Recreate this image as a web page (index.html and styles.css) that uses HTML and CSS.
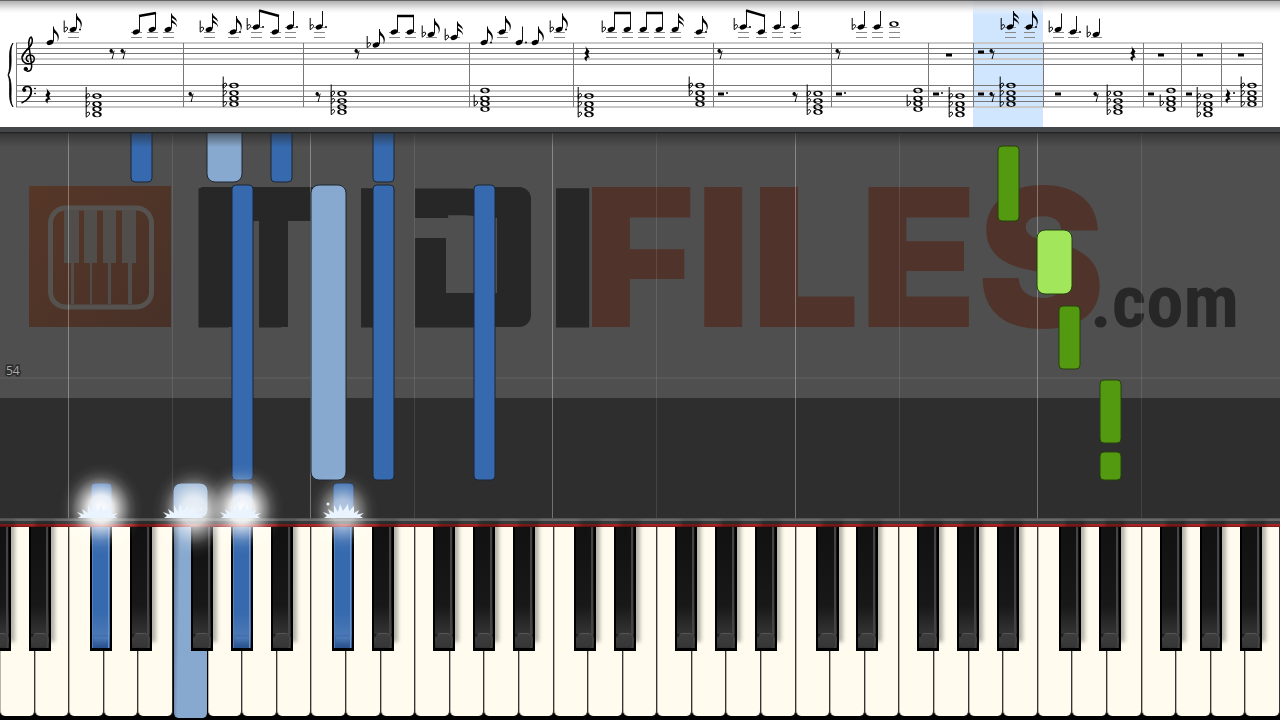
FILE: index.html
```html
<!DOCTYPE html>
<html lang="en">
<head>
<meta charset="utf-8">
<meta name="viewport" content="width=device-width, initial-scale=1">
<title>MIDIFILES.com</title>
<link rel="stylesheet" href="styles.css">
</head>
<body>
<header class="score">
  <svg class="score-sheet" viewBox="0 0 1280 127" role="img" aria-label="Sheet music">
    <defs>
      <ellipse id="head" rx="3.5" ry="2.4" transform="rotate(-20)"/>
      <path id="whole" fill-rule="evenodd" d="M-4.700 0a4.700 2.700 0 1 0 9.400 0a4.700 2.700 0 1 0-9.400 0M-2.600-.8C-2-2.300 1.500-2.200 2.500 0C2.800 1.700 1.500 2.200 0 2C-1.600 1.700-2.800.7-2.600-.8"/>
      <path id="flat" fill="none" stroke="#000" stroke-width="1" d="M-1.800-9V2.600C0 1.700 2 0 1.600-1.500C1.200-3-.8-2.500-1.800-1"/>
      <path id="flag" d="M0-16C.5-12 5.500-10 5.300-5.500C5.200-3 4.400-1.500 3.800-.8C5-4.500 4-8 0-10Z"/>
      <path id="flag2" d="M0-16C.5-13 5.500-12 5.500-7.500C5-9 2-11 0-11.800ZM0-11C.5-8 6-7 5.500-2C5-5 2-6 0-7Z"/>
      <path id="rest8" d="M-2.500-3.500a1.700 1.700 0 1 1 3.200 1C2-2.500 2.400-3.500 2.800-4.300L.6 5H-.5L1.500-1.400C-.5-.5-3-1.500-2.500-3.500"/>
      <path id="rest4" d="M-1.800-8L2.500-2.500C.5-.5 .8 1 3 3.800C.5 3-1 4-.2 7.400C-4 5-2.500 2-.2 2.300L-2.600-1C-.5-3-.5-5-1.800-8"/>
      <rect id="rest2" x="-3" y="-1.500" width="6" height="3"/>
      <linearGradient id="fade" x2="0" y2="1"><stop stop-color="#999"/><stop offset=".5" stop-color="#ddd"/><stop offset="1" stop-color="#fff" stop-opacity="0"/></linearGradient>
    </defs>
    <rect class="measure" x="973" width="70" height="127"/>
    <rect width="1280" height="15" fill="url(#fade)" opacity=".85"/>
    <rect width="1280" height="1" fill="#666"/>
    <g id="staves" class="staves"></g>
    <path d="M13 43C8.500 50 14 65 8.500 75C14 85 8.500 100 13 107C6.500 99 12 84 8 75C12 66 6.500 51 13 43" stroke="#000" stroke-width=".8"/>
    <g class="clef">
      <path d="M26.500 71C30.500 72 32.500 69 31.500 64L28.800 45C28.500 40 30 37 31.200 37C33 39 32.800 44 29 48C24 52 22 55 22 58C22 62 26 64.500 30 63.500C34 62.500 35.500 59 33.500 56.500C31.500 54 27 54.500 26.300 58C26 60 27.500 61.500 29 61.500"/>
      <path d="M22.500 57C23.500 52 29 49 32 43" stroke-width="2.200"/>
      <circle cx="25.800" cy="69" r="1.700"/>
      <path d="M23 90C23.500 85.500 31 84.500 31.500 91C31.500 96.500 27 100.500 21.500 103"/>
      <path d="M30 87C32.500 91 31 95 27.500 99" stroke-width="2.200"/>
      <circle cx="24.300" cy="90" r="1.500"/><circle cx="35" cy="88.500" r=".5"/><circle cx="35" cy="93.500" r=".5"/>
    </g>
    <g id="music"></g>
  </svg>
</header>
<main class="player">
  <svg class="roll" viewBox="0 132 1280 386" role="img" aria-label="Falling notes">
    <defs>
      <linearGradient id="rust" x2="1" y2="1"><stop stop-color="#563728"/><stop offset="1" stop-color="#483128"/></linearGradient>
      <linearGradient id="shade" x2="0" y2="1"><stop stop-color="#222" stop-opacity=".6"/><stop offset="1" stop-color="#222" stop-opacity="0"/></linearGradient>
      <radialGradient id="glow"><stop stop-color="#fff"/><stop offset=".3" stop-color="#fff" stop-opacity=".88"/><stop offset=".5" stop-color="#fff" stop-opacity=".5"/><stop offset=".7" stop-color="#fff" stop-opacity=".16"/><stop offset=".85" stop-color="#fff" stop-opacity=".04"/><stop offset="1" stop-color="#fff" stop-opacity="0"/></radialGradient>
      <path id="spark" d="M-20 0L-17-2L-21-6L-14-3.500L-16-9L-10-5L-10-13L-6-6L-4-14L-1-7L4-14L5-7L10-12L10-5L15-8L13-3.500L20-5L16-2L19 0Z"/>
    </defs>
    <rect class="bg-far" y="132" width="1280" height="266"/>
    <rect class="bg-near" y="398" width="1280" height="120"/>
    <g class="logo">
      <rect x="29" y="186" width="142" height="141" fill="url(#rust)"/>
      <rect class="logo-frame" x="50.500" y="208" width="101" height="99" rx="15"/>
      <path class="logo-keys" d="M64 210h15v53H64zM84 210h13v53H84zM103 210h13v53h-13zM122 210h14v53h-14zM71 263h3v41h-3zM90 263h2v41h-2zM108 263h3v41h-3zM128 263h4v41h-4z"/>
      <text class="logo-midi" x="188" y="325">MIDI</text>
      <g class="logo-cut"><rect x="234" y="220" width="25" height="108"/><rect x="288" y="220" width="23" height="108"/></g>
      <g class="logo-bar"><rect x="200" y="187" width="145" height="34" rx="3"/><rect x="226" y="220" width="8" height="107"/><rect x="259" y="220" width="29" height="107"/><rect x="480" y="187" width="51" height="140" rx="12"/></g>
      <g class="logo-cut"><rect x="531" y="187" width="17" height="140"/><rect x="446" y="218" width="51" height="75"/><rect x="412" y="218" width="40" height="20"/></g>
      <rect class="logo-bar" x="440" y="293" width="58" height="20"/>
      <text class="logo-files" x="583" y="327">FILES</text>
      <text class="logo-com" x="1090" y="327">.com</text>
    </g>
    <g id="grid" class="grid"></g>
    <text class="bar-number" x="6" y="375">54</text>
    <g id="notes"></g>
    <rect y="132" width="1280" height="15" fill="url(#shade)"/>
    <g class="glows">
      <ellipse cx="101" cy="509" rx="42" ry="46" fill="url(#glow)"/>
      <ellipse cx="194" cy="511" rx="42" ry="48" fill="url(#glow)" opacity=".85"/>
      <ellipse cx="242" cy="509" rx="42" ry="46" fill="url(#glow)"/>
      <ellipse cx="343" cy="512" rx="36" ry="42" fill="url(#glow)" opacity=".65"/>
      <use href="#spark" x="98" y="518"/><use href="#spark" x="184" y="518"/><use href="#spark" x="241" y="518"/><use href="#spark" x="344" y="518"/>
      <circle cx="328" cy="504" r="1.500"/><circle cx="201" cy="509" r="1.500"/>
    </g>
  </svg>
  <div class="rail"></div>
  <div class="keyboard">
    <div id="white-keys" class="white-keys"></div>
    <div id="black-keys" class="black-keys"></div>
  </div>
</main>
<script src="app.js"></script>
</body>
</html>
```
FILE: styles.css
```css
* { box-sizing: border-box; }
body { margin: 0; background: #000; overflow-x: hidden; }
.score { position: relative; z-index: 3; background: #fff; border-bottom: 5px solid #444747; box-shadow: 0 1px 1px #222; }
.score-sheet { display: block; width: 100%; height: auto; }
.measure { fill: #d0e6ff; }
.staves path { fill: none; stroke: #777; stroke-width: 1; }
.staves .soft { stroke: #c8c8c8; stroke-width: 2; }
.clef path { fill: none; stroke: #000; stroke-width: 1.500; }
.clef circle { stroke: #000; }
.stem { stroke: #111; stroke-width: 1; }
.ledger { stroke: #888; stroke-width: 1; }
.beam { stroke: #000; stroke-width: 2.500; }
.player { display: flex; flex-direction: column; }
.roll { display: block; position: relative; z-index: 2; width: 100%; height: auto; overflow: visible; pointer-events: none; }
.bg-far, .logo-cut { fill: #4f4f4f; }
.bg-near { fill: #2e2e2e; }
.logo-frame { fill: none; stroke: #555250; stroke-width: 5; }
.logo-keys { fill: #504d4a; }
.logo-midi { font: 700 195px "Liberation Sans", sans-serif; fill: #272727; stroke: #272727; stroke-width: 5; }
.logo-bar { fill: #272727; }
.logo-files { font: 900 192px Inter, sans-serif; fill: #50342b; }
.logo-com { font: 700 75px "Liberation Sans Narrow", "Roboto Condensed", sans-serif; fill: #272727; }
.grid path { stroke: #fff; stroke-width: 1; }
.grid .octave { opacity: .32; }
.grid .half { opacity: .1; }
.grid .bar { opacity: .05; stroke-width: 2; }
.bar-number { font: 12px "Open Sans", sans-serif; fill: #aaa; stroke: #2a2a2a; stroke-width: 3; paint-order: stroke; }
.note { stroke: #1d2733; stroke-width: 1; }
.left-black { fill: #3669ae; }
.left-white { fill: #87a9cf; }
.right-black { fill: #549a10; stroke: #24400c; }
.right-white { fill: #a1e65b; stroke: #24400c; }
.glows use, .glows circle { fill: #e9f4ff; }
.rail { height: 9px; background: linear-gradient(#555 0 1px, #686868 1px 3px, #3a3c3c 3px 6px, #a82424 6px 8px, #851a1a 8px); }
.keyboard { position: relative; height: 193px; padding-bottom: 4px; background: #000; }
.white-keys { display: flex; height: 100%; }
button { margin: 0; padding: 0; border: 0; font: inherit; }
.white { flex: 1; background: #fffcef; border-right: 1px solid #333; border-left: 1px solid #b8b5aa; border-radius: 0 0 5px 5px; }
.white.pressed { height: 191px; background: linear-gradient(91deg, #5d7593, #87a9cf 18%); border-color: #000; }
.black { position: absolute; top: 0; width: 1.72%; height: 124px; border: solid #000; border-width: 0 2px 3px; background: linear-gradient(90deg, transparent 86%, #444 86% 93%, transparent 93%), linear-gradient(#111, #181818 65%, #333 88%, #171717 89%, #414141 92%, #303030); box-shadow: 5px -8px 4px -1px rgba(0, 0, 0, .3); }
.black::after { content: ""; position: absolute; left: 2px; right: 2px; bottom: 1px; height: 13px; border-top: 1px solid #555; border-radius: 4px 4px 0 0; background: linear-gradient(#3d3d3d, #363636); }
.black.pressed { background: linear-gradient(90deg, #5580b9 0 1px, transparent 1px 16px, #6d91c1 16px 17px, transparent 17px), linear-gradient(#3669ae 70%, #4977b5 88%, #2a528e); box-shadow: none; }
.black.pressed::after { height: 10px; border: 0; border-radius: 0 0 8px 8px; background: linear-gradient(#4f7db9, #28518c); }
```
FILE: app.js
```javascript
const byId = id => document.getElementById(id);
const use = (id, x, y) => `<use href="#${id}" x="${x}" y="${y}"/>`;
const line = (cls, x1, y1, x2, y2) => `<path class="${cls}" d="M${x1} ${y1}L${x2} ${y2}"/>`;
const dot = (x, y) => `<circle cx="${x}" cy="${y}" r="1"/>`;

// Staves and bar lines
let staves = '';
for (const y of [43, 59, 91, 107]) staves += line('soft', 16, y, 1262, y);
for (const y of [48.5, 53.5, 64.5, 85.5, 96.5, 101.5]) staves += line('', 16, y, 1262, y);
for (const x of [16.5, 183.5, 303.5, 469.5, 573.5, 713.5, 831.5, 928.5, 973.5, 1043.5, 1143.5, 1181.5, 1221.5, 1262.5])
  staves += line('', x, 43, x, 107);
byId('staves').innerHTML = staves;

// Melody: x, y, marks (b flat, d dotted, 8 / 6 flags, w whole, n stem drawn by a beam)
const melody = [
  [50, 42.5, '8'], [73, 29.5, 'b8d'], [136, 32, 'n'], [152, 29.5, 'n'], [168, 29.5, '6'],
  [209, 29.5, 'b6'], [233, 32, '8d'], [256, 27, 'bnd'], [275, 32, 'n'], [290, 27, 'd'], [319, 27, 'bd'],
  [376, 45, 'b8'], [394, 32, 'n'], [410, 32, 'n'], [431, 34.5, 'b8'], [454, 37.5, 'b6'],
  [484, 42.5, '8d'], [502, 32, '8'], [519, 42.5, 'd'], [535, 42.5, '8'], [559, 29.5, 'b8d'],
  [611, 29.5, 'bn'], [627, 29.5, 'n'], [643, 29.5, 'n'], [659, 29.5, 'n'], [675, 29.5, '6'], [699, 32, '8d'],
  [743, 27, 'bnd'], [761, 32, 'n'], [777, 27, 'd'], [795, 27, ''], [861, 27, 'b'], [877, 27, ''], [894, 24, 'w'],
  [1010, 27, 'b6'], [1029, 27, '8d'], [1058, 29.5, 'b'], [1073, 32, 'd'], [1096, 34.5, 'b']
];
let music = dot(795, 33);
for (const [x, y, marks] of melody) {
  for (const ly of [27.5, 32.5, 37.5]) if (y <= ly) music += line('ledger', x - 5, ly, x + 6, ly);
  if (marks.includes('w')) { music += use('whole', x, y); continue; }
  music += use('head', x, y);
  if (!marks.includes('n')) music += line('stem', x + 3.5, y - 1, x + 3.5, y - 16);
  if (marks.includes('8')) music += use('flag', x + 3.5, y);
  if (marks.includes('6')) music += use('flag2', x + 3.5, y);
  if (marks.includes('b')) music += use('flat', x - 7, y);
  if (marks.includes('d')) music += dot(x + 7, y);
}
// Beams: x, note y, beam y for each end
for (const [x1, n1, b1, x2, n2, b2] of [
  [136, 32, 16, 152, 29.5, 13], [256, 27, 10.5, 275, 32, 16], [394, 32, 16, 410, 32, 16],
  [611, 29.5, 13, 627, 29.5, 13], [643, 29.5, 13, 659, 29.5, 13], [743, 27, 10.5, 761, 32, 16]
]) music += line('stem', x1 + 3.5, n1, x1 + 3.5, b1) + line('stem', x2 + 3.5, n2, x2 + 3.5, b2) + line('beam', x1 + 3, b1, x2 + 4, b2);

// Bass chords: head heights and flat heights
const chords = {
  low: [[96, 104, 109, 114.5], [96, 104, 114.5]],
  high: [[85.5, 93, 98.5, 104], [85.5, 93, 104]],
  open: [[85.5, 93, 98.5, 104], [85.5, 93]],
  mid: [[93.5, 101, 107, 112], [93.5, 101, 112]],
  one: [[90.5, 98.5, 103.5, 109], [103.5]]
};
for (const [x, name] of [[97, 'low'], [234, 'high'], [342, 'mid'], [485, 'one'], [589, 'low'], [700, 'open'], [818, 'mid'],
  [918, 'one'], [960, 'low'], [1011, 'high'], [1118, 'mid'], [1171, 'one'], [1208, 'low'], [1252, 'high']]) {
  const [heads, flats] = chords[name];
  for (const y of heads) music += use('whole', x, y);
  for (const y of flats) music += use('flat', x - 9, y);
}
for (const [x, y] of [[112, 54], [123, 54], [357, 54], [720, 54], [838, 54], [992, 54],
  [191, 97], [318, 97], [795, 97], [992, 97], [1096, 97]]) music += use('rest8', x, y);
for (const [x, y] of [[587, 54], [1133, 54], [48, 96], [1228, 96]]) music += use('rest4', x, y);
for (const [x, y] of [[949, 55], [981, 52], [1161, 55], [1200, 55], [1241, 55], [721, 94], [839, 94], [936, 94],
  [981, 94], [1058, 94], [1151, 94], [1189, 94]]) music += use('rest2', x, y);
for (const x of [727, 845, 942, 1234]) music += dot(x, 93);
byId('music').innerHTML = music;

// Piano roll
let grid = line('bar', 0, 378, 1280, 378);
for (let i = 0; i < 5; i++) {
  const c = Math.round(68 + i * 242.2) + 0.5;
  grid += line('octave', c, 132, c, 518) + line('half', c + 104, 132, c + 104, 518);
}
byId('grid').innerHTML = grid;

byId('notes').innerHTML = [
  ['left-black', 131, 120, 182], ['left-white', 207, 120, 182], ['left-black', 271, 120, 182], ['left-black', 373, 120, 182],
  ['left-black', 232, 185, 480], ['left-white', 311, 185, 480], ['left-black', 373, 185, 480], ['left-black', 474, 185, 480],
  ['left-black', 91, 483, 518], ['left-white', 173, 483, 518], ['left-black', 232, 483, 518], ['left-black', 333, 483, 518],
  ['right-black', 998, 146, 221], ['right-white', 1037, 230, 294], ['right-black', 1059, 306, 369],
  ['right-black', 1100, 380, 443], ['right-black', 1100, 452, 480]
].map(([kind, x, top, bottom]) => {
  const wide = kind.endsWith('white');
  return `<rect class="note ${kind}" x="${x}" y="${top}" width="${wide ? 35 : 21}" height="${bottom - top}" rx="${wide ? 8 : 4}"/>`;
}).join('');

// Keyboard: A to B, 37 white keys
const octave = ['C', 'D', 'E', 'F', 'G', 'A', 'B'];
let white = '';
for (let i = 0; i < 37; i++)
  white += `<button class="white${i === 5 ? ' pressed' : ''}" aria-label="${octave[(i + 5) % 7]}"></button>`;
byId('white-keys').innerHTML = white;

let black = '';
for (let o = -1; o < 5; o++)
  [['C♯', 21], ['D♯', 61], ['F♯', 122], ['G♯', 162], ['A♯', 202]].forEach(([name, offset], k) => {
    const x = 69 + o * 242.16 + offset;
    if (x < -22 || x > 1280) return;
    const pressed = (o === 0 && (k === 0 || k === 3)) || (o === 1 && k === 0);
    black += `<button class="black${pressed ? ' pressed' : ''}" aria-label="${name}" style="left:${(x / 12.8).toFixed(3)}%"></button>`;
  });
byId('black-keys').innerHTML = black;
```
